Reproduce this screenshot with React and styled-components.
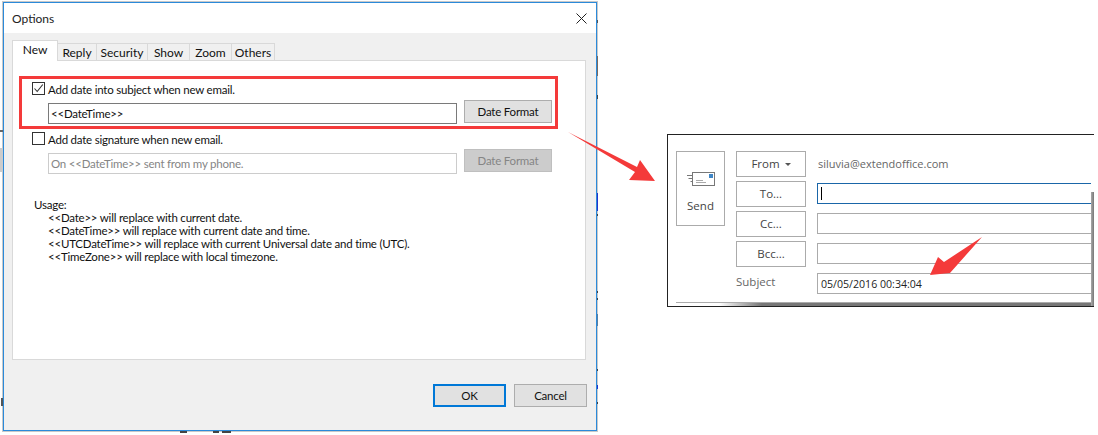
import React from "react";
import styled, { createGlobalStyle } from "styled-components";

const GlobalStyle = createGlobalStyle`
  html, body {
    margin: 0;
    padding: 0;
    background: #fff;
  }
  * {
    box-sizing: border-box;
  }
`;

const Page = styled.div`
  position: relative;
  width: 1098px;
  height: 435px;
  padding: 2px 0 0 3px;
  display: flex;
  align-items: flex-start;
  overflow: hidden;
  font-family: "Lato", "Open Sans", sans-serif;
  font-size: 11.5px;
  letter-spacing: -0.22px;
  color: #111;
`;

const Dialog = styled.div`
  width: 594px;
  height: 429px;
  flex: none;
  display: flex;
  flex-direction: column;
  border: 1px solid #2b8ada;
  box-shadow: 0 0 0 1px #c9c9c9;
`;

const TitleBar = styled.div`
  height: 30px;
  flex: none;
  background: #fff;
  display: flex;
  align-items: center;
  justify-content: space-between;
  padding: 0 9px 0 8px;
  font-size: 12px;
  letter-spacing: 0;
  color: #222;
`;

const CloseIcon = styled.svg`
  width: 11px;
  height: 11px;
  display: block;
`;

const Body = styled.div`
  flex: 1;
  background: #f0f0f0;
  padding: 8px 9px 0 8px;
  display: flex;
  flex-direction: column;
`;

const TabStrip = styled.div`
  display: flex;
  align-items: flex-end;
  height: 20px;
  position: relative;
  z-index: 1;
  margin-bottom: -1px;
`;

const Tab = styled.div`
  height: ${(props) => (props.$active ? "21px" : "18px")};
  width: ${(props) => props.$width}px;
  background: ${(props) => (props.$active ? "#fff" : "#f0f0f0")};
  border: 1px solid #d9d9d9;
  border-bottom: ${(props) => (props.$active ? "none" : "1px solid #d9d9d9")};
  border-left-width: ${(props) => (props.$first || props.$active ? "1px" : "0")};
  display: flex;
  justify-content: center;
  align-items: ${(props) => (props.$active ? "flex-start" : "center")};
  padding-top: ${(props) => (props.$active ? "1px" : "0")};
  font-size: 12px;
  letter-spacing: 0;
  color: #111;
`;

const Panel = styled.div`
  width: 574px;
  height: 300px;
  flex: none;
  background: #fff;
  border: 1px solid #d9d9d9;
`;

const RedFrame = styled.div`
  width: 539px;
  height: 53px;
  margin: 15px 0 0 6px;
  border: 3px solid #f43a3a;
  padding: 3px 0 0 10px;
`;

const PlainGroup = styled.div`
  margin: 3px 0 0 19px;
`;

const CheckRow = styled.label`
  display: flex;
  align-items: center;
  height: 13px;
  gap: 3px;
`;

const CheckLabel = styled.span`
  padding-top: 1px;
  white-space: nowrap;
`;

const CheckBox = styled.span`
  width: 13px;
  height: 13px;
  flex: none;
  border: 1px solid #333;
  background: #fff;
  display: flex;
  align-items: center;
  justify-content: center;
`;

const FieldRow = styled.div`
  display: flex;
  align-items: flex-start;
  gap: 7px;
  padding-left: 16px;
  margin-top: ${(props) => props.$top}px;
`;

const TextField = styled.div`
  width: 409px;
  height: 21px;
  margin-top: ${(props) => props.$top}px;
  border: 1px solid ${(props) => (props.$disabled ? "#ccc" : "#7a7a7a")};
  color: ${(props) => (props.$disabled ? "#858585" : "#111")};
  display: flex;
  align-items: center;
  padding-left: 2px;
  white-space: nowrap;
`;

const DialogButton = styled.button`
  width: ${(props) => props.$width}px;
  height: 23px;
  padding: 0;
  font: inherit;
  letter-spacing: inherit;
  color: ${(props) => (props.$disabled ? "#858585" : "#111")};
  background: ${(props) => (props.$disabled ? "#ccc" : "#e1e1e1")};
  border: ${(props) => (props.$primary ? "2px solid #0078d7" : "1px solid")};
  border-color: ${(props) =>
    props.$primary ? "#0078d7" : props.$disabled ? "#bfbfbf" : "#adadad"};
`;

const Usage = styled.div`
  margin: 24px 0 0 21px;
  line-height: 13px;
`;

const UsageLine = styled.div`
  padding-left: 14px;
  white-space: nowrap;
`;

const Footer = styled.div`
  display: flex;
  justify-content: flex-end;
  gap: 8px;
  margin-top: 24px;
`;

const ComposeWindow = styled.div`
  position: relative;
  width: 427px;
  height: 173px;
  flex: none;
  margin: 132px 0 0 70px;
  background: #fff;
  border-top: 1px solid #222;
  border-left: 1px solid #222;
  border-bottom: 1px solid #222;
  display: flex;
  flex-direction: column;
  font-family: "Open Sans", sans-serif;
  font-size: 11.5px;
  letter-spacing: 0;
  color: #444;
  overflow: hidden;

  &::after {
    content: "";
    position: absolute;
    top: 57px;
    right: 0;
    bottom: 0;
    width: 3px;
    background: linear-gradient(to right, #aaa, #777);
  }
`;

const ComposeTop = styled.div`
  display: flex;
  gap: 11px;
  padding: 16px 0 0 8px;
`;

const SendButton = styled.div`
  width: 49px;
  height: 75px;
  flex: none;
  border: 1px solid #ababab;
  display: flex;
  flex-direction: column;
  align-items: center;
  padding-top: 20px;
  gap: 11px;
`;

const FieldGrid = styled.div`
  width: 355px;
  display: grid;
  grid-template-columns: 70px 1fr;
  grid-auto-rows: 26px;
  column-gap: 11px;
  row-gap: 4px;
  align-items: center;
`;

const HeaderButton = styled.div`
  height: 26px;
  border: 1px solid #ababab;
  display: flex;
  align-items: center;
  justify-content: center;
  gap: 5px;
  padding-bottom: 2px;
`;

const FromCaret = styled.span`
  width: 0;
  height: 0;
  margin-top: 3px;
  border-left: 3px solid transparent;
  border-right: 3px solid transparent;
  border-top: 3px solid #555;
`;

const HeaderInput = styled.div`
  height: 21px;
  align-self: start;
  margin-top: 2px;
  border: 1px solid ${(props) => (props.$focused ? "#1a66a8" : "#ababab")};
  border-right: none;
  display: flex;
  align-items: center;
  padding-left: 3px;
  font-size: 10.6px;
  color: #222;
`;

const Caret = styled.span`
  width: 1px;
  height: 13px;
  background: #000;
`;

const PlainLabel = styled.div`
  padding-left: ${(props) => props.$indent}px;
  padding-bottom: ${(props) => props.$lift}px;
  color: ${(props) => props.$color};
  font-size: ${(props) => props.$size}px;
  white-space: nowrap;
`;

const ComposeRule = styled.div`
  margin: auto 0 0 8px;
  height: 1px;
  background: #ababab;
`;

const ComposeShade = styled.div`
  height: 3px;
  background: linear-gradient(to right, #fff 12%, #777 22%);
`;

const OverlayLayer = styled.svg`
  position: absolute;
  top: 0;
  left: 0;
  width: 1098px;
  height: 435px;
  pointer-events: none;
  z-index: 2;
`;

const tabs = [
  { label: "New", width: 46, active: true },
  { label: "Reply", width: 39 },
  { label: "Security", width: 51 },
  { label: "Show", width: 42 },
  { label: "Zoom", width: 42 },
  { label: "Others", width: 43 },
];

const usageLines = [
  "<<Date>> will replace with current date.",
  "<<DateTime>> will replace with current date and time.",
  "<<UTCDateTime>> will replace with current Universal date and time (UTC).",
  "<<TimeZone>> will replace with local timezone.",
];

// bits of the window behind the dialog that stick out at its edges
const strayMarks = [
  { x: 597, y: 20, h: 3, fill: "#555" },
  { x: 597, y: 56, h: 20, fill: "#7a6a60" },
  { x: 597, y: 95, h: 4, fill: "#444" },
  { x: 597, y: 193, h: 18, fill: "#2233cc" },
  { x: 597, y: 214, h: 2, fill: "#444" },
  { x: 597, y: 291, h: 2, fill: "#444" },
  { x: 597, y: 298, h: 2, fill: "#444" },
  { x: 597, y: 314, h: 12, fill: "#5b7f9f" },
  { x: 597, y: 369, h: 2, fill: "#444" },
  { x: 597, y: 385, h: 4, fill: "#2233cc" },
  { x: 597, y: 402, h: 2, fill: "#444" },
  { x: 0, y: 130, w: 3, h: 2, fill: "#666" },
  { x: 0, y: 148, w: 3, h: 24, fill: "#ccc" },
  { x: 1, y: 398, w: 2, h: 8, fill: "#555" },
  { x: 180, y: 431, w: 7, h: 2, fill: "#444" },
  { x: 213, y: 431, w: 6, h: 2, fill: "#444" },
  { x: 222, y: 431, w: 9, h: 2, fill: "#444" },
];

function Tick() {
  return (
    <svg width="11" height="11" viewBox="0 0 11 11">
      <path d="M1.5 5.5 L4.2 8.5 L9.8 1.5" fill="none" stroke="#333" strokeWidth="1.1" />
    </svg>
  );
}

function SendIcon() {
  return (
    <svg width="28" height="15" viewBox="0 0 28 15">
      <path d="M0 3.5h6M1.5 6.5h4.5M3.5 9.5h2.5" stroke="#777" strokeWidth="1" />
      <rect x="5.5" y="0.5" width="22" height="13" fill="#fff" stroke="#777" />
      <rect x="22" y="2" width="4" height="4" fill="#3f86c6" />
      <path d="M9 10.5h10M9 8.5h7" stroke="#aaa" strokeWidth="1" />
    </svg>
  );
}

export default function App() {
  return (
    <Page>
      <GlobalStyle />
      <Dialog>
        <TitleBar>
          <span>Options</span>
          <CloseIcon viewBox="0 0 11 11">
            <path d="M0.5 0.5 L10.5 10.5 M10.5 0.5 L0.5 10.5" stroke="#222" strokeWidth="1" />
          </CloseIcon>
        </TitleBar>
        <Body>
          <TabStrip>
            {tabs.map((tab, i) => (
              <Tab key={tab.label} $width={tab.width} $active={tab.active} $first={i === 0}>
                {tab.label}
              </Tab>
            ))}
          </TabStrip>
          <Panel>
            <RedFrame>
              <CheckRow>
                <CheckBox>
                  <Tick />
                </CheckBox>
                <CheckLabel>Add date into subject when new email.</CheckLabel>
              </CheckRow>
              <FieldRow $top={5}>
                <TextField $top={3}>{"<<DateTime>>"}</TextField>
                <DialogButton $width={88}>Date Format</DialogButton>
              </FieldRow>
            </RedFrame>
            <PlainGroup>
              <CheckRow>
                <CheckBox />
                <CheckLabel>Add date signature when new email.</CheckLabel>
              </CheckRow>
              <FieldRow $top={4}>
                <TextField $top={4} $disabled>
                  {"On <<DateTime>> sent from my phone."}
                </TextField>
                <DialogButton $width={88} $disabled>
                  Date Format
                </DialogButton>
              </FieldRow>
            </PlainGroup>
            <Usage>
              Usage:
              {usageLines.map((line) => (
                <UsageLine key={line}>{line}</UsageLine>
              ))}
            </Usage>
          </Panel>
          <Footer>
            <DialogButton $width={73} $primary>
              OK
            </DialogButton>
            <DialogButton $width={73}>Cancel</DialogButton>
          </Footer>
        </Body>
      </Dialog>

      <ComposeWindow>
        <ComposeTop>
          <SendButton>
            <SendIcon />
            Send
          </SendButton>
          <FieldGrid>
            <HeaderButton>
              From
              <FromCaret />
            </HeaderButton>
            <PlainLabel $indent={1} $lift={2} $size={11} $color="#666">
              siluvia@extendoffice.com
            </PlainLabel>
            <HeaderButton>To...</HeaderButton>
            <HeaderInput $focused>
              <Caret />
            </HeaderInput>
            <HeaderButton>Cc...</HeaderButton>
            <HeaderInput />
            <HeaderButton>Bcc...</HeaderButton>
            <HeaderInput />
            <PlainLabel $indent={0} $lift={5} $size={11.5} $color="#666">
              Subject
            </PlainLabel>
            <HeaderInput>05/05/2016 00:34:04</HeaderInput>
          </FieldGrid>
        </ComposeTop>
        <ComposeRule />
        <ComposeShade />
      </ComposeWindow>

      <OverlayLayer viewBox="0 0 1098 435">
        {strayMarks.map((mark) => (
          <rect
            key={`${mark.x}-${mark.y}`}
            x={mark.x}
            y={mark.y}
            width={mark.w || 1}
            height={mark.h}
            fill={mark.fill}
          />
        ))}
        <polygon points="568,132 637,167 640,160 655,181 629,180 635,172" fill="#f43a3a" />
        <polygon points="982,237 950,273 930,275 938,257 944,262" fill="#f43a3a" />
      </OverlayLayer>
    </Page>
  );
}
